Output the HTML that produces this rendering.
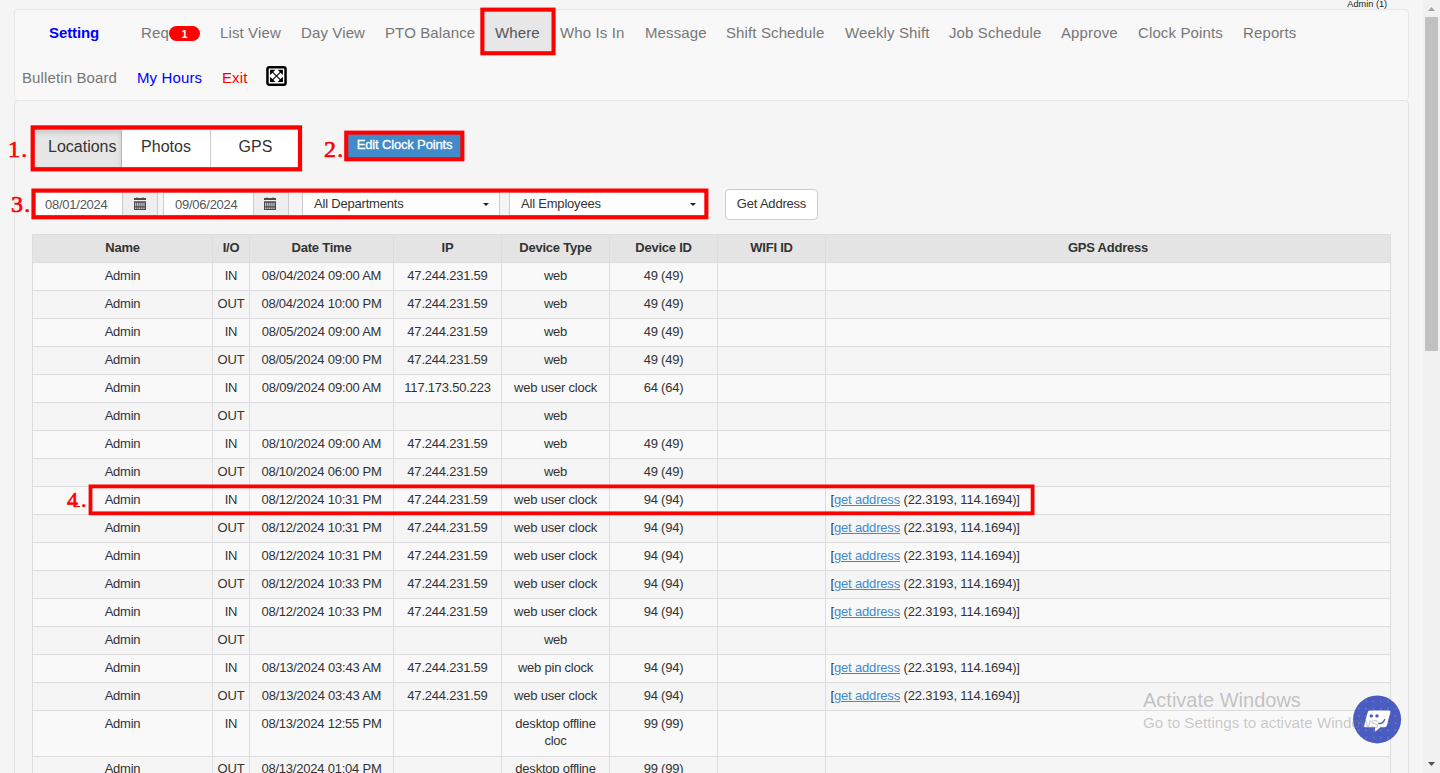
<!DOCTYPE html>
<html>
<head>
<meta charset="utf-8">
<title>Where</title>
<style>
*{box-sizing:border-box;}
html,body{margin:0;padding:0;}
body{width:1440px;height:773px;overflow:hidden;position:relative;background:#f5f5f5;font-family:"Liberation Sans",sans-serif;font-size:13px;color:#333;}
.abs{position:absolute;}
#admin{left:1347.3px;top:-2.5px;font-size:9.2px;color:#222;white-space:nowrap;line-height:12px;}
#navbar{left:14px;top:9px;width:1395px;height:92px;background:#f8f8f8;border:1px solid #e7e7e7;border-radius:4px;}
.nv{position:absolute;font-size:15px;line-height:20px;color:#777;white-space:nowrap;letter-spacing:.12px;}
#active{left:484px;top:10px;width:68px;height:44px;background:#e7e7e7;}
#panel{left:14px;top:100px;width:1395px;height:700px;background:#f5f5f5;border:1px solid #e3e3e3;border-radius:4px;}
.red{position:absolute;border:4px solid #ff0000;left:0;top:0;}
.num{position:absolute;font-family:"Liberation Serif",serif;font-weight:normal;font-size:24px;color:#ff0000;line-height:24px;letter-spacing:1.2px;-webkit-text-stroke:.65px #ff0000;white-space:nowrap;}
.tab{position:absolute;top:129px;height:39px;font-size:16px;line-height:20px;padding-top:7px;text-align:center;color:#333;background:#fff;border:1px solid #ccc;}
.inp{position:absolute;top:192px;height:24px;background:#fff;border:1px solid #ccc;font-size:13px;line-height:24px;color:#555;padding-left:9px;white-space:nowrap;letter-spacing:-.25px;}
.sel{color:#333;padding-left:11px;letter-spacing:-.2px;line-height:21px;}
.addon{position:absolute;top:192px;height:24px;background:#eee;border:1px solid #ccc;}
table{position:absolute;left:32px;top:234px;border-collapse:collapse;table-layout:fixed;width:1358px;}
td,th{border:1px solid #ddd;padding:4px 4px;line-height:18px;font-size:13px;text-align:center;vertical-align:top;color:#333;overflow:hidden;letter-spacing:-.22px;}
th{background:#e4e4e4;font-weight:bold;color:#333;}
tr{height:28px;}
tbody tr:nth-child(odd) td{background:#f9f9f9;}
tbody tr:nth-child(even) td{background:#f5f5f5;}
td.g{text-align:left;padding-left:4.5px;white-space:nowrap;letter-spacing:-.17px;}
td.g u{color:#428bca;}
tr.last td{padding-top:3px;}
</style>
</head>
<body>
<div class="abs" id="admin">Admin (1)</div>
<div class="abs" id="navbar"></div>
<div class="abs" id="panel"></div>
<div class="abs" id="active"></div>

<div class="nv" style="left:49px;top:23px;color:#0000ff;font-weight:bold;letter-spacing:-.1px;">Setting</div>
<div class="nv" style="left:141px;top:23px;">Req</div>
<div class="abs" style="left:169px;top:26px;width:31px;height:15px;border-radius:8px;background:#ff0000;color:#fff;font-weight:bold;font-size:11px;line-height:16px;text-align:center;">1</div>
<div class="nv" style="left:220px;top:23px;">List View</div>
<div class="nv" style="left:301px;top:23px;">Day View</div>
<div class="nv" style="left:385px;top:23px;">PTO Balance</div>
<div class="nv" style="left:495px;top:23px;color:#555;">Where</div>
<div class="nv" style="left:560px;top:23px;">Who Is In</div>
<div class="nv" style="left:645px;top:23px;">Message</div>
<div class="nv" style="left:726px;top:23px;">Shift Schedule</div>
<div class="nv" style="left:845px;top:23px;">Weekly Shift</div>
<div class="nv" style="left:949px;top:23px;">Job Schedule</div>
<div class="nv" style="left:1061px;top:23px;">Approve</div>
<div class="nv" style="left:1138px;top:23px;">Clock Points</div>
<div class="nv" style="left:1243px;top:23px;">Reports</div>
<div class="nv" style="left:22px;top:68px;">Bulletin Board</div>
<div class="nv" style="left:137px;top:68px;color:#0000ff;">My Hours</div>
<div class="nv" style="left:222px;top:68px;color:#ff0000;">Exit</div>
<svg class="abs" style="left:266px;top:65px;" width="22" height="22" viewBox="0 0 22 22">
  <rect x="1.45" y="2.2" width="18.1" height="17.5" rx="1.8" fill="#fff" stroke="#000" stroke-width="2.5"/>
  <path d="M4.1 4.8h5.3l-5.3 5.3zM16.9 4.8v5.3l-5.3-5.3zM4.1 17.1v-5.3l5.3 5.3zM16.9 17.1h-5.3l5.3-5.3z" fill="#000"/>
  <path d="M5.5 6.2L15.5 15.8M15.5 6.2L5.5 15.8" stroke="#000" stroke-width="1.1"/>
</svg>

<!-- tabs -->
<div class="tab" style="left:32px;width:90px;background:#e6e6e6;border-color:#adadad;text-align:left;padding-left:15px;box-shadow:inset 0 3px 5px rgba(0,0,0,.125);">Locations</div>
<div class="tab" style="left:121px;width:90px;">Photos</div>
<div class="tab" style="left:210px;width:91px;">GPS</div>
<div class="abs" style="left:121px;top:130px;width:1px;height:37px;background:#b4b4b4;"></div>
<div class="num" style="left:8px;top:136.7px;">1.</div>

<div class="abs" style="left:346px;top:132px;width:117px;height:28px;background:#428bca;border:1px solid #357ebd;color:#fff;font-size:13px;line-height:20px;padding-top:2px;text-align:center;letter-spacing:-.15px;-webkit-text-stroke:.3px #fff;">Edit Clock Points</div>
<div class="num" style="left:324px;top:136.7px;">2.</div>

<!-- filters -->
<div class="inp" style="left:35px;width:88px;">08/01/2024</div>
<div class="addon" style="left:122px;width:36px;"></div>
<svg class="abs" style="left:134px;top:197px;" width="12" height="13" viewBox="0 0 12 13"><path fill="#555" opacity=".55" d="M2.3 0h1.3v1.2H2.3zM8.4 0h1.3v1.2H8.4z"/><path fill="#4a4a4a" d="M0 1h12v2.1H0zM0 4.3h12V13H0z"/><path fill="#e4e4e4" d="M1.25 5.7h1.05v3.5h-1.05zM1.25 10.6h1.05v1.4h-1.05zM3.30 5.7h1.05v3.5h-1.05zM3.30 10.6h1.05v1.4h-1.05zM5.35 5.7h1.05v3.5h-1.05zM5.35 10.6h1.05v1.4h-1.05zM7.40 5.7h1.05v3.5h-1.05zM7.40 10.6h1.05v1.4h-1.05zM9.45 5.7h1.05v3.5h-1.05zM9.45 10.6h1.05v1.4h-1.05z"/></svg>
<div class="inp" style="left:163px;width:91px;padding-left:11px;">09/06/2024</div>
<div class="addon" style="left:253px;width:36px;"></div>
<svg class="abs" style="left:264px;top:197px;" width="12" height="13" viewBox="0 0 12 13"><path fill="#555" opacity=".55" d="M2.3 0h1.3v1.2H2.3zM8.4 0h1.3v1.2H8.4z"/><path fill="#4a4a4a" d="M0 1h12v2.1H0zM0 4.3h12V13H0z"/><path fill="#e4e4e4" d="M1.25 5.7h1.05v3.5h-1.05zM1.25 10.6h1.05v1.4h-1.05zM3.30 5.7h1.05v3.5h-1.05zM3.30 10.6h1.05v1.4h-1.05zM5.35 5.7h1.05v3.5h-1.05zM5.35 10.6h1.05v1.4h-1.05zM7.40 5.7h1.05v3.5h-1.05zM7.40 10.6h1.05v1.4h-1.05zM9.45 5.7h1.05v3.5h-1.05zM9.45 10.6h1.05v1.4h-1.05z"/></svg>
<div class="inp sel" style="left:302px;width:198px;">All Departments</div>
<div class="abs" style="left:483px;top:203px;width:0;height:0;border-left:3px solid transparent;border-right:3px solid transparent;border-top:3px solid #222;"></div>
<div class="inp sel" style="left:509px;width:198px;">All Employees</div>
<div class="abs" style="left:690px;top:203px;width:0;height:0;border-left:3px solid transparent;border-right:3px solid transparent;border-top:3px solid #222;"></div>
<div class="num" style="left:11px;top:192px;">3.</div>
<div class="abs" style="left:725px;top:189px;width:93px;height:31px;background:#fff;border:1px solid #ccc;border-radius:4px;font-size:13px;line-height:27px;text-align:center;color:#333;letter-spacing:-.2px;">Get Address</div>

<table>
<colgroup><col style="width:180px"><col style="width:37px"><col style="width:144px"><col style="width:108px"><col style="width:108px"><col style="width:108px"><col style="width:108px"><col style="width:565px"></colgroup>
<thead><tr><th>Name</th><th>I/O</th><th>Date Time</th><th>IP</th><th>Device Type</th><th>Device ID</th><th>WIFI ID</th><th>GPS Address</th></tr></thead>
<tbody>
<tr><td>Admin</td><td>IN</td><td>08/04/2024 09:00 AM</td><td>47.244.231.59</td><td>web</td><td>49 (49)</td><td></td><td class="g"></td></tr>
<tr><td>Admin</td><td>OUT</td><td>08/04/2024 10:00 PM</td><td>47.244.231.59</td><td>web</td><td>49 (49)</td><td></td><td class="g"></td></tr>
<tr><td>Admin</td><td>IN</td><td>08/05/2024 09:00 AM</td><td>47.244.231.59</td><td>web</td><td>49 (49)</td><td></td><td class="g"></td></tr>
<tr><td>Admin</td><td>OUT</td><td>08/05/2024 09:00 PM</td><td>47.244.231.59</td><td>web</td><td>49 (49)</td><td></td><td class="g"></td></tr>
<tr><td>Admin</td><td>IN</td><td>08/09/2024 09:00 AM</td><td>117.173.50.223</td><td>web user clock</td><td>64 (64)</td><td></td><td class="g"></td></tr>
<tr><td>Admin</td><td>OUT</td><td></td><td></td><td>web</td><td></td><td></td><td class="g"></td></tr>
<tr><td>Admin</td><td>IN</td><td>08/10/2024 09:00 AM</td><td>47.244.231.59</td><td>web</td><td>49 (49)</td><td></td><td class="g"></td></tr>
<tr><td>Admin</td><td>OUT</td><td>08/10/2024 06:00 PM</td><td>47.244.231.59</td><td>web</td><td>49 (49)</td><td></td><td class="g"></td></tr>
<tr><td>Admin</td><td>IN</td><td>08/12/2024 10:31 PM</td><td>47.244.231.59</td><td>web user clock</td><td>94 (94)</td><td></td><td class="g">[<u>get address</u> (22.3193, 114.1694)]</td></tr>
<tr><td>Admin</td><td>OUT</td><td>08/12/2024 10:31 PM</td><td>47.244.231.59</td><td>web user clock</td><td>94 (94)</td><td></td><td class="g">[<u>get address</u> (22.3193, 114.1694)]</td></tr>
<tr><td>Admin</td><td>IN</td><td>08/12/2024 10:31 PM</td><td>47.244.231.59</td><td>web user clock</td><td>94 (94)</td><td></td><td class="g">[<u>get address</u> (22.3193, 114.1694)]</td></tr>
<tr><td>Admin</td><td>OUT</td><td>08/12/2024 10:33 PM</td><td>47.244.231.59</td><td>web user clock</td><td>94 (94)</td><td></td><td class="g">[<u>get address</u> (22.3193, 114.1694)]</td></tr>
<tr><td>Admin</td><td>IN</td><td>08/12/2024 10:33 PM</td><td>47.244.231.59</td><td>web user clock</td><td>94 (94)</td><td></td><td class="g">[<u>get address</u> (22.3193, 114.1694)]</td></tr>
<tr><td>Admin</td><td>OUT</td><td></td><td></td><td>web</td><td></td><td></td><td class="g"></td></tr>
<tr><td>Admin</td><td>IN</td><td>08/13/2024 03:43 AM</td><td>47.244.231.59</td><td>web pin clock</td><td>94 (94)</td><td></td><td class="g">[<u>get address</u> (22.3193, 114.1694)]</td></tr>
<tr><td>Admin</td><td>OUT</td><td>08/13/2024 03:43 AM</td><td>47.244.231.59</td><td>web user clock</td><td>94 (94)</td><td></td><td class="g">[<u>get address</u> (22.3193, 114.1694)]</td></tr>
<tr style="height:46px"><td>Admin</td><td>IN</td><td>08/13/2024 12:55 PM</td><td></td><td>desktop offline<br><span style="position:relative;top:-1px">cloc</span></td><td>99 (99)</td><td></td><td class="g"></td></tr>
<tr class="last" style="height:46px"><td>Admin</td><td>OUT</td><td>08/13/2024 01:04 PM</td><td></td><td>desktop offline<br><span style="position:relative;top:-1px">cloc</span></td><td>99 (99)</td><td></td><td class="g"></td></tr>
</tbody>
</table>
<div class="num" style="left:67px;top:488px;font-size:22px;letter-spacing:3.1px;">4.</div><div class="abs" style="left:74px;top:506px;width:6px;height:1.4px;background:#ff0000;"></div>

<svg class="abs" style="left:0;top:0;pointer-events:none;" width="1440" height="773" fill="none" stroke="#ff0000">
<rect x="482.35" y="9.65" width="71.20" height="43.60" stroke-width="4.10"/>
<rect x="32.70" y="127.40" width="267.30" height="41.90" stroke-width="4.20"/>
<rect x="346.25" y="132.65" width="116.10" height="26.60" stroke-width="4.10"/>
<rect x="33.45" y="190.55" width="672.90" height="26.70" stroke-width="4.10"/>
<rect x="90.50" y="486.40" width="942.10" height="26.90" stroke-width="3.80"/>
</svg>
<!-- chat -->
<svg class="abs" style="left:1340px;top:685px;" width="80" height="70" viewBox="0 0 80 70">
  <defs><pattern id="dots" x=".7" y="5.5" width="7.3" height="7.25" patternUnits="userSpaceOnUse"><circle cx="3.6" cy="3.6" r=".9" fill="#fff" opacity=".2"/></pattern>
  <clipPath id="cc"><circle cx="37.1" cy="34.4" r="24"/></clipPath></defs>
  <circle cx="37.1" cy="34.4" r="24" fill="#4a5cc0"/>
  <rect x="10" y="8" width="56" height="54" fill="url(#dots)" clip-path="url(#cc)"/>
  <path d="M29.6 25.6h19.6q1.6 0 1.2 1.6l-3.6 13.4q-.4 1.6-2 1.6h-4.4l-5.2 4.6-.3-4.6h-9.6q-1.6 0-1.2-1.6l3.6-13.4q.4-1.6 2-1.6z" fill="#fff"/>
  <circle cx="31.3" cy="30.9" r="1.7" fill="#4a5cc0"/><circle cx="37" cy="30.9" r="1.7" fill="#4a5cc0"/>
  <path d="M38.8 38.6q4.4 .2 5.7-4" fill="none" stroke="#4a5cc0" stroke-width="1.5" stroke-linecap="round"/>
</svg>
<!-- watermark -->
<div class="abs" style="left:1143px;top:688px;font-size:20px;line-height:24px;color:rgba(130,130,130,.45);white-space:nowrap;">Activate Windows</div>
<div class="abs" style="left:1143px;top:714px;font-size:15.2px;line-height:18px;color:rgba(130,130,130,.42);white-space:nowrap;">Go to Settings to activate Windows.</div>

<!-- scrollbar -->
<div class="abs" style="left:1423px;top:0;width:17px;height:773px;background:#f1f1f1;"></div>
<div class="abs" style="left:1425px;top:17px;width:13px;height:334px;background:#c1c1c1;"></div>
<svg class="abs" style="left:1423px;top:0;" width="17" height="773"><path d="M5 11h7l-3.5-4z" fill="#a3a3a3"/><path d="M5 762h7l-3.5 4z" fill="#505050"/></svg>
</body>
</html>
